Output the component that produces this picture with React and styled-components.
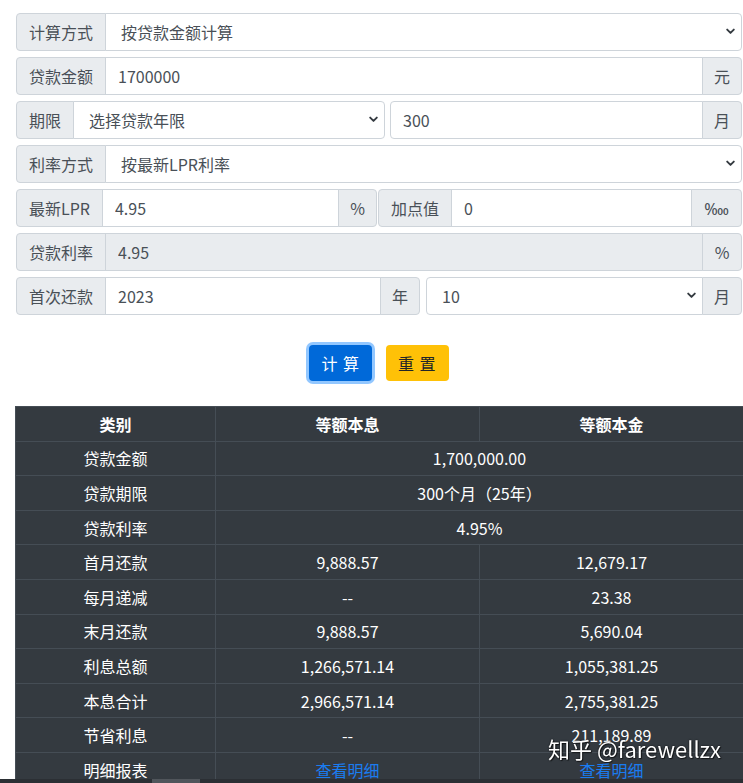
import React from 'react';
import styled, { createGlobalStyle, css } from 'styled-components';

const GlobalStyle = createGlobalStyle`
  html, body {
    margin: 0;
    padding: 0;
    background: #fff;
    overflow: hidden;
  }
  body {
    font-family: "Noto Sans CJK SC", "Noto Sans", sans-serif;
    font-size: 16px;
    color: #212529;
  }
  * { box-sizing: border-box; }
`;

const Page = styled.div`
  padding: 13px 1px 0 16px;
`;

const Form = styled.div`
  display: flex;
  flex-direction: column;
  gap: 6px;
`;

const Row = styled.div`
  display: flex;
  gap: ${p => p.$gap || 0}px;
`;

const Group = styled.div`
  display: flex;
  height: 38px;
  ${p => p.$w ? css`width: ${p.$w}px; flex: none;` : css`flex: 1;`}
  & > * { border-radius: 0; }
  & > *:not(:first-child) { margin-left: -1px; }
  & > *:first-child { border-top-left-radius: 4px; border-bottom-left-radius: 4px; }
  & > *:last-child { border-top-right-radius: 4px; border-bottom-right-radius: 4px; }
`;

const Addon = styled.span`
  display: flex;
  align-items: center;
  justify-content: center;
  flex: none;
  padding: 6px 12px;
  ${p => p.$w && css`width: ${p.$w}px; padding: 6px 0;`}
  background: #e9ecef;
  border: 1px solid #ced4da;
  color: #495057;
  font-size: 16px;
  line-height: 24px;
  white-space: nowrap;
`;

const Input = styled.input`
  flex: 1;
  min-width: 0;
  padding: 6px 12px;
  border: 1px solid #ced4da;
  font-family: inherit;
  font-size: 16px;
  line-height: 24px;
  color: #495057;
  background: ${p => p.disabled ? '#e9ecef' : '#fff'};
  outline: none;
`;

const SelectBox = styled.div`
  position: relative;
  flex: 1;
  min-width: 0;
  border: 1px solid #ced4da;
  background: #fff;
  overflow: hidden;
  select {
    appearance: none;
    width: 100%;
    height: 100%;
    border: 0;
    outline: none;
    background: transparent;
    padding: 6px 28px 6px 15px;
    font-family: inherit;
    font-size: 16px;
    line-height: 24px;
    color: #495057;
  }
  svg {
    position: absolute;
    right: 6px;
    top: 50%;
    margin-top: -4px;
    pointer-events: none;
  }
`;

const Chevron = () => (
  <svg width="9" height="7" viewBox="0 0 9 7">
    <path d="M1.2 1.6 L4.5 4.9 L7.8 1.6" fill="none" stroke="#343a40" strokeWidth="1.9" strokeLinecap="round" strokeLinejoin="round" />
  </svg>
);

const Select = ({ value }) => (
  <SelectBox>
    <select defaultValue={value}>
      <option value={value}>{value}</option>
    </select>
    <Chevron />
  </SelectBox>
);

const Buttons = styled.div`
  display: flex;
  justify-content: center;
  gap: 14px;
  margin-top: 30px;
`;

const Button = styled.button`
  height: 36px;
  padding: 6px 12px;
  border: 0;
  border-radius: 4px;
  font-family: inherit;
  font-size: 16px;
  line-height: 24px;
  letter-spacing: 1px;
  cursor: pointer;
  ${p => p.$primary ? css`
    background: #0069d9;
    color: #fff;
    box-shadow: 0 0 0 3px rgba(38, 143, 255, 0.5);
  ` : css`
    background: #ffc107;
    color: #212529;
  `}
`;

const Table = styled.table`
  width: 728px;
  margin: 25px 0 0 -1px;
  border-collapse: collapse;
  table-layout: fixed;
  background: #343a40;
  color: #fff;
  font-size: 16px;
  line-height: 24px;
  th, td {
    border: 1px solid #454d55;
    padding: 4.8px 6px;
    text-align: center;
    white-space: nowrap;
  }
  th { font-weight: bold; }
`;

const Link = styled.a`
  color: #1a7cf0;
  text-decoration: none;
`;

const Watermark = styled.div`
  position: fixed;
  left: 548px;
  top: 733px;
  font-size: 22px;
  line-height: 30px;
  color: #fff;
  white-space: nowrap;
  text-shadow: 0 0 2px rgba(0, 0, 0, 0.8), 1px 1px 1px rgba(0, 0, 0, 0.6);
  pointer-events: none;
`;

const ScrollBar = styled.div`
  position: fixed;
  left: 0;
  right: 0;
  bottom: 0;
  height: 4px;
  background: #2b2f34;
`;

const Thumb = styled.div`
  margin-left: 152px;
  width: 48px;
  height: 100%;
  background: #50555b;
`;

const rows = [
  { label: '贷款金额', span: '1,700,000.00' },
  { label: '贷款期限', span: '300个月（25年）' },
  { label: '贷款利率', span: '4.95%' },
  { label: '首月还款', a: '9,888.57', b: '12,679.17' },
  { label: '每月递减', a: '--', b: '23.38' },
  { label: '末月还款', a: '9,888.57', b: '5,690.04' },
  { label: '利息总额', a: '1,266,571.14', b: '1,055,381.25' },
  { label: '本息合计', a: '2,966,571.14', b: '2,755,381.25' },
  { label: '节省利息', a: '--', b: '211,189.89' },
];

export default function App() {
  return (
    <>
      <GlobalStyle />
      <Page>
        <Form>
          <Row>
            <Group>
              <Addon>计算方式</Addon>
              <Select value="按贷款金额计算" />
            </Group>
          </Row>
          <Row>
            <Group>
              <Addon>贷款金额</Addon>
              <Input defaultValue="1700000" />
              <Addon $w={40}>元</Addon>
            </Group>
          </Row>
          <Row $gap={5}>
            <Group $w={369}>
              <Addon>期限</Addon>
              <Select value="选择贷款年限" />
            </Group>
            <Group>
              <Input defaultValue="300" />
              <Addon $w={40}>月</Addon>
            </Group>
          </Row>
          <Row>
            <Group>
              <Addon>利率方式</Addon>
              <Select value="按最新LPR利率" />
            </Group>
          </Row>
          <Row $gap={1}>
            <Group $w={361}>
              <Addon>最新LPR</Addon>
              <Input defaultValue="4.95" />
              <Addon $w={39}>%</Addon>
            </Group>
            <Group>
              <Addon>加点值</Addon>
              <Input defaultValue="0" />
              <Addon $w={51}>‱</Addon>
            </Group>
          </Row>
          <Row>
            <Group>
              <Addon>贷款利率</Addon>
              <Input defaultValue="4.95" disabled />
              <Addon $w={40}>%</Addon>
            </Group>
          </Row>
          <Row $gap={6}>
            <Group $w={404}>
              <Addon>首次还款</Addon>
              <Input defaultValue="2023" />
              <Addon $w={40}>年</Addon>
            </Group>
            <Group>
              <Select value="10" />
              <Addon $w={40}>月</Addon>
            </Group>
          </Row>
        </Form>
        <Buttons>
          <Button $primary>计 算</Button>
          <Button>重 置</Button>
        </Buttons>
        <Table>
          <colgroup>
            <col style={{ width: 200 }} />
            <col style={{ width: 264 }} />
            <col style={{ width: 264 }} />
          </colgroup>
          <thead>
            <tr>
              <th>类别</th>
              <th>等额本息</th>
              <th>等额本金</th>
            </tr>
          </thead>
          <tbody>
            {rows.map(r => (
              <tr key={r.label}>
                <td>{r.label}</td>
                {r.span ? (
                  <td colSpan={2}>{r.span}</td>
                ) : (
                  <>
                    <td>{r.a}</td>
                    <td>{r.b}</td>
                  </>
                )}
              </tr>
            ))}
            <tr>
              <td>明细报表</td>
              <td><Link href="#">查看明细</Link></td>
              <td><Link href="#">查看明细</Link></td>
            </tr>
          </tbody>
        </Table>
      </Page>
      <Watermark>知乎 @farewellzx</Watermark>
      <ScrollBar><Thumb /></ScrollBar>
    </>
  );
}
